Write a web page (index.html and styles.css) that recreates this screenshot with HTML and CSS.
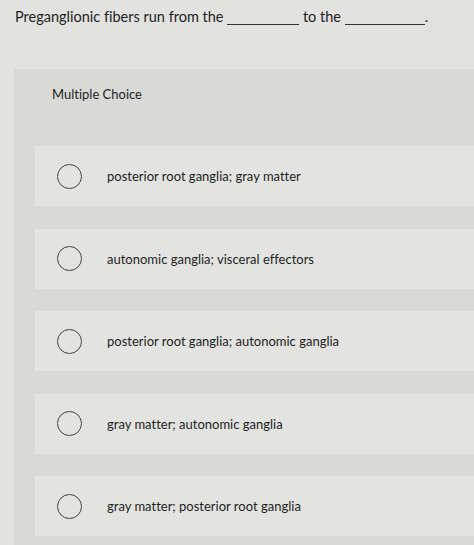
FILE: index.html
```html
<!DOCTYPE html>
<html>
<head>
<meta charset="utf-8">
<link rel="stylesheet" href="styles.css">
</head>
<body>
<div class="question">Preganglionic fibers run from the <span class="blank blank1"></span> to the <span class="blank blank2"></span>.</div>
<div class="panel">
  <div class="label">Multiple Choice</div>
  <div class="options">
    <div class="option"><span class="radio"></span><span class="text">posterior root ganglia; gray matter</span></div>
    <div class="option"><span class="radio"></span><span class="text">autonomic ganglia; visceral effectors</span></div>
    <div class="option"><span class="radio"></span><span class="text">posterior root ganglia; autonomic ganglia</span></div>
    <div class="option"><span class="radio"></span><span class="text">gray matter; autonomic ganglia</span></div>
    <div class="option"><span class="radio"></span><span class="text">gray matter; posterior root ganglia</span></div>
  </div>
</div>
</body>
</html>
```
FILE: styles.css
```css
html, body {
  margin: 0;
  padding: 0;
}
body {
  background: #e2e2e0;
  font-family: Lato, "Liberation Sans", sans-serif;
  font-variant-ligatures: none;
  color: #1e1e1e;
  width: 474px;
  height: 545px;
  overflow: hidden;
}
.question {
  font-size: 14.5px;
  padding: 8px 0 0 15px;
  height: 61px;
  white-space: nowrap;
}
.blank {
  display: inline-block;
  border-bottom: 1px solid #333;
  vertical-align: -3px;
  height: 12px;
}
.blank1 { width: 72px; }
.blank2 { width: 80px; }
.panel {
  margin-left: 14px;
  background: #d9dad7;
  height: 476px;
  padding-top: 17px;
  box-sizing: border-box;
}
.label {
  font-size: 13px;
  padding-left: 38px;
  height: 60px;
  color: #1e1e1e;
}
.options {
  display: flex;
  flex-direction: column;
  gap: 22.5px;
  margin-left: 21px;
}
.option {
  background: #e3e4e1;
  height: 60px;
  display: flex;
  align-items: center;
  padding-left: 22px;
}
.radio {
  width: 23px;
  height: 23px;
  border: 1.6px solid #444;
  border-radius: 50%;
  flex: none;
}
.text {
  margin-left: 25px;
  font-size: 13px;
  color: #1e1e1e;
}
```
